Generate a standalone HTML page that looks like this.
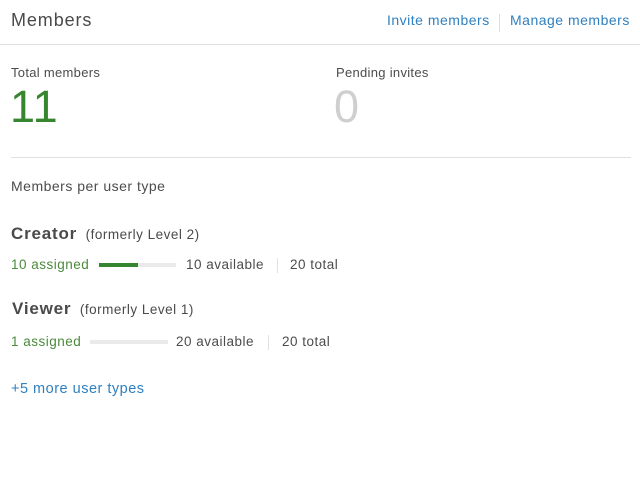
<!DOCTYPE html>
<html><head><meta charset="utf-8"><style>
body{margin:0;width:640px;height:486px;background:#fff;font-family:"Liberation Sans",sans-serif;color:#4c4c4c;position:relative;overflow:hidden;letter-spacing:0.5px}
.a{position:absolute;white-space:nowrap}
.blue{color:#2f80c1}
.green{color:#4a8a3b}
</style></head><body>
<div class="a" style="left:11px;top:10px;font-size:18px;color:#4a4a4a;letter-spacing:0.9px">Members</div>
<div class="a blue" style="left:387px;top:12px;font-size:14px">Invite members</div>
<div class="a" style="left:499px;top:14px;width:1px;height:18px;background:#ddd"></div>
<div class="a blue" style="left:510px;top:12px;font-size:14px">Manage members</div>
<div class="a" style="left:0;top:44px;width:640px;height:1px;background:#e0e0e0"></div>
<div class="a" style="left:11px;top:65px;font-size:13px;letter-spacing:0.3px">Total members</div>
<div class="a" style="left:336px;top:65px;font-size:13px;letter-spacing:0.3px">Pending invites</div>
<div class="a" style="left:10px;top:81px;font-size:45px;color:#35862f;letter-spacing:1px">11</div>
<div class="a" style="left:334px;top:81px;font-size:45px;color:#cfcfcf">0</div>
<div class="a" style="left:11px;top:157px;width:620px;height:1px;background:#e0e0e0"></div>
<div class="a" style="left:11px;top:178px;font-size:14px">Members per user type</div>
<div class="a" style="left:11px;top:224px;font-size:17px;font-weight:bold;color:#4a4a4a;letter-spacing:0.8px">Creator <span style="font-size:13.5px;font-weight:normal;margin-left:3px;letter-spacing:0.5px">(formerly Level 2)</span></div>
<div class="a green" style="left:11px;top:257px;font-size:13.5px">10 assigned</div>
<div class="a" style="left:99px;top:263px;width:77px;height:4px;background:#eaeaea"></div>
<div class="a" style="left:99px;top:263px;width:39px;height:4px;background:#35862f"></div>
<div class="a" style="left:186px;top:257px;font-size:13.5px">10 available</div>
<div class="a" style="left:277px;top:258px;width:1px;height:15px;background:#f0dcdc"></div>
<div class="a" style="left:290px;top:257px;font-size:13.5px">20 total</div>
<div class="a" style="left:12px;top:299px;font-size:17px;font-weight:bold;color:#4a4a4a;letter-spacing:0.8px">Viewer <span style="font-size:13.5px;font-weight:normal;margin-left:3px;letter-spacing:0.5px">(formerly Level 1)</span></div>
<div class="a green" style="left:11px;top:334px;font-size:13.5px">1 assigned</div>
<div class="a" style="left:90px;top:340px;width:78px;height:4px;background:#eaeaea"></div>
<div class="a" style="left:176px;top:334px;font-size:13.5px">20 available</div>
<div class="a" style="left:268px;top:335px;width:1px;height:15px;background:#e0e0e0"></div>
<div class="a" style="left:282px;top:334px;font-size:13.5px">20 total</div>
<div class="a blue" style="left:11px;top:381px;font-size:14.5px">+5 more user types</div>
</body></html>
